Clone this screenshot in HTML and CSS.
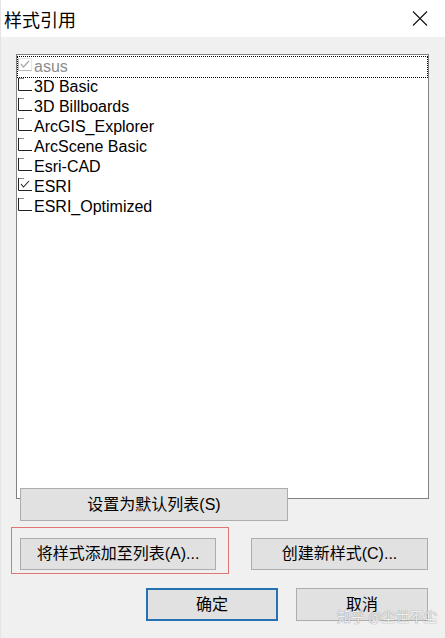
FILE: index.html
```html
<!DOCTYPE html>
<html lang="zh-CN">
<head>
<meta charset="utf-8">
<title>样式引用</title>
<link rel="stylesheet" href="styles.css">
</head>
<body>
<div class="dialog">
  <div class="titlebar">
    <span class="title">样式引用</span>
    <svg class="close" width="16" height="15" viewBox="0 0 16 15"><path d="M1 0.5 L15 14.5 M15 0.5 L1 14.5" stroke="#111" stroke-width="1.1" fill="none"/></svg>
  </div>
  <div class="content">
    <div class="listbox">
      <div class="item focus disabled">
        <svg class="cb" width="14" height="13" viewBox="0 0 14 13"><path d="M0.5 0 V12.5 H14" stroke="#b8b8b8" fill="none"/><path d="M0.5 0.5 H13.5 V12.5" stroke="#e6e6e6" fill="none"/><path d="M3 6 L5.5 9 L11 3" stroke="#a8a8a8" stroke-width="1.2" fill="none"/></svg>
        <span>asus</span>
      </div>
      <div class="item">
        <svg class="cb" width="14" height="13" viewBox="0 0 14 13"><path d="M0.5 0.5 H6" stroke="#8a8a8a" fill="none"/><path d="M0.5 0 V12.5 H14" stroke="#222" fill="none"/></svg>
        <span>3D Basic</span>
      </div>
      <div class="item">
        <svg class="cb" width="14" height="13" viewBox="0 0 14 13"><path d="M0.5 0.5 H6" stroke="#8a8a8a" fill="none"/><path d="M0.5 0 V12.5 H14" stroke="#222" fill="none"/></svg>
        <span>3D Billboards</span>
      </div>
      <div class="item">
        <svg class="cb" width="14" height="13" viewBox="0 0 14 13"><path d="M0.5 0.5 H6" stroke="#8a8a8a" fill="none"/><path d="M0.5 0 V12.5 H14" stroke="#222" fill="none"/></svg>
        <span>ArcGIS_Explorer</span>
      </div>
      <div class="item">
        <svg class="cb" width="14" height="13" viewBox="0 0 14 13"><path d="M0.5 0.5 H6" stroke="#8a8a8a" fill="none"/><path d="M0.5 0 V12.5 H14" stroke="#222" fill="none"/></svg>
        <span>ArcScene Basic</span>
      </div>
      <div class="item">
        <svg class="cb" width="14" height="13" viewBox="0 0 14 13"><path d="M0.5 0.5 H6" stroke="#8a8a8a" fill="none"/><path d="M0.5 0 V12.5 H14" stroke="#222" fill="none"/></svg>
        <span>Esri-CAD</span>
      </div>
      <div class="item">
        <svg class="cb" width="14" height="13" viewBox="0 0 14 13"><path d="M0.5 0.5 H6" stroke="#8a8a8a" fill="none"/><path d="M0.5 0 V12.5 H14" stroke="#222" fill="none"/><path d="M3 6 L5.5 9 L11 3" stroke="#222" stroke-width="1.1" fill="none"/></svg>
        <span>ESRI</span>
      </div>
      <div class="item">
        <svg class="cb" width="14" height="13" viewBox="0 0 14 13"><path d="M0.5 0.5 H6" stroke="#8a8a8a" fill="none"/><path d="M0.5 0 V12.5 H14" stroke="#222" fill="none"/></svg>
        <span>ESRI_Optimized</span>
      </div>
    </div>
    <button class="btn btn-setdefault">设置为默认列表(S)</button>
    <div class="row row-add">
      <div class="highlight">
        <button class="btn btn-add">将样式添加至列表(A)...</button>
      </div>
      <button class="btn btn-new">创建新样式(C)...</button>
    </div>
    <div class="row row-ok">
      <button class="btn btn-ok">确定</button>
      <button class="btn btn-cancel">取消</button>
    </div>
  </div>
  <div class="watermark">知乎 @尘世不尘</div>
</div>
</body>
</html>
```

FILE: styles.css
```css
html, body {
  margin: 0;
  padding: 0;
  background: #f0f0f0;
}

.dialog {
  position: relative;
  width: 445px;
  height: 638px;
  background: #f0f0f0;
  box-sizing: border-box;
  border-left: 1px solid #e4e4e4;
  overflow: hidden;
}

.titlebar {
  height: 37px;
  background: #ffffff;
  display: flex;
  align-items: center;
  justify-content: space-between;
  padding: 0 17px 0 3px;
}

.title {
  font-family: "Noto Sans CJK SC", sans-serif;
  font-size: 18px;
  line-height: 20px;
  color: #000;
}

.close {
  display: block;
  margin-top: -1px;
}

.content {
  display: flex;
  flex-direction: column;
  align-items: flex-start;
}

.listbox {
  margin: 17px 0 0 15px;
  width: 413px;
  height: 445px;
  box-sizing: border-box;
  border: 1px solid #828282;
  background: #ffffff;
  padding: 2px 1px 0 1px;
}

.item {
  height: 20px;
  display: flex;
  align-items: flex-start;
  font-family: "Liberation Sans", Arial, sans-serif;
  font-size: 16px;
  line-height: 20px;
  color: #000;
}

.item.focus {
  outline: 1px dotted #000;
  outline-offset: 0;
}

.item.disabled {
  color: #8c8c8c;
}

.cb {
  display: block;
  flex: none;
  margin: 1px 2px 0 0;
}

.btn {
  font-family: "Liberation Sans", "Noto Sans CJK SC", sans-serif;
  font-size: 16px;
  color: #000;
  background: #e1e1e1;
  border: 1px solid #adadad;
  box-sizing: border-box;
  padding: 0;
  margin: 0;
  line-height: 20px;
  white-space: nowrap;
}

.btn-setdefault {
  position: relative;
  margin: -11px 0 0 19px;
  width: 268px;
  height: 33px;
}

.row {
  display: flex;
  align-items: flex-start;
}

.row-add {
  margin-top: 6px;
}

.highlight {
  margin-left: 10px;
  width: 218px;
  height: 47px;
  box-sizing: border-box;
  border: 1px solid #e07575;
  padding: 10px 0 0 8px;
}

.btn-add {
  width: 196px;
  height: 32px;
}

.btn-new {
  margin: 11px 0 0 22px;
  width: 177px;
  height: 32px;
}

.row-ok {
  margin: 14px 0 0 145px;
  gap: 18px;
}

.btn-ok {
  width: 132px;
  height: 33px;
  border: 2px solid #2571b3;
}

.btn-cancel {
  width: 132px;
  height: 33px;
}

.watermark {
  position: absolute;
  left: 336px;
  top: 607px;
  white-space: nowrap;
  font-family: "Noto Sans CJK SC", sans-serif;
  font-size: 14px;
  line-height: 18px;
  color: rgba(255, 255, 255, 0.85);
  text-shadow: 0 0 1px #9a9a9a, 0 0 1px #9a9a9a;
}
```
